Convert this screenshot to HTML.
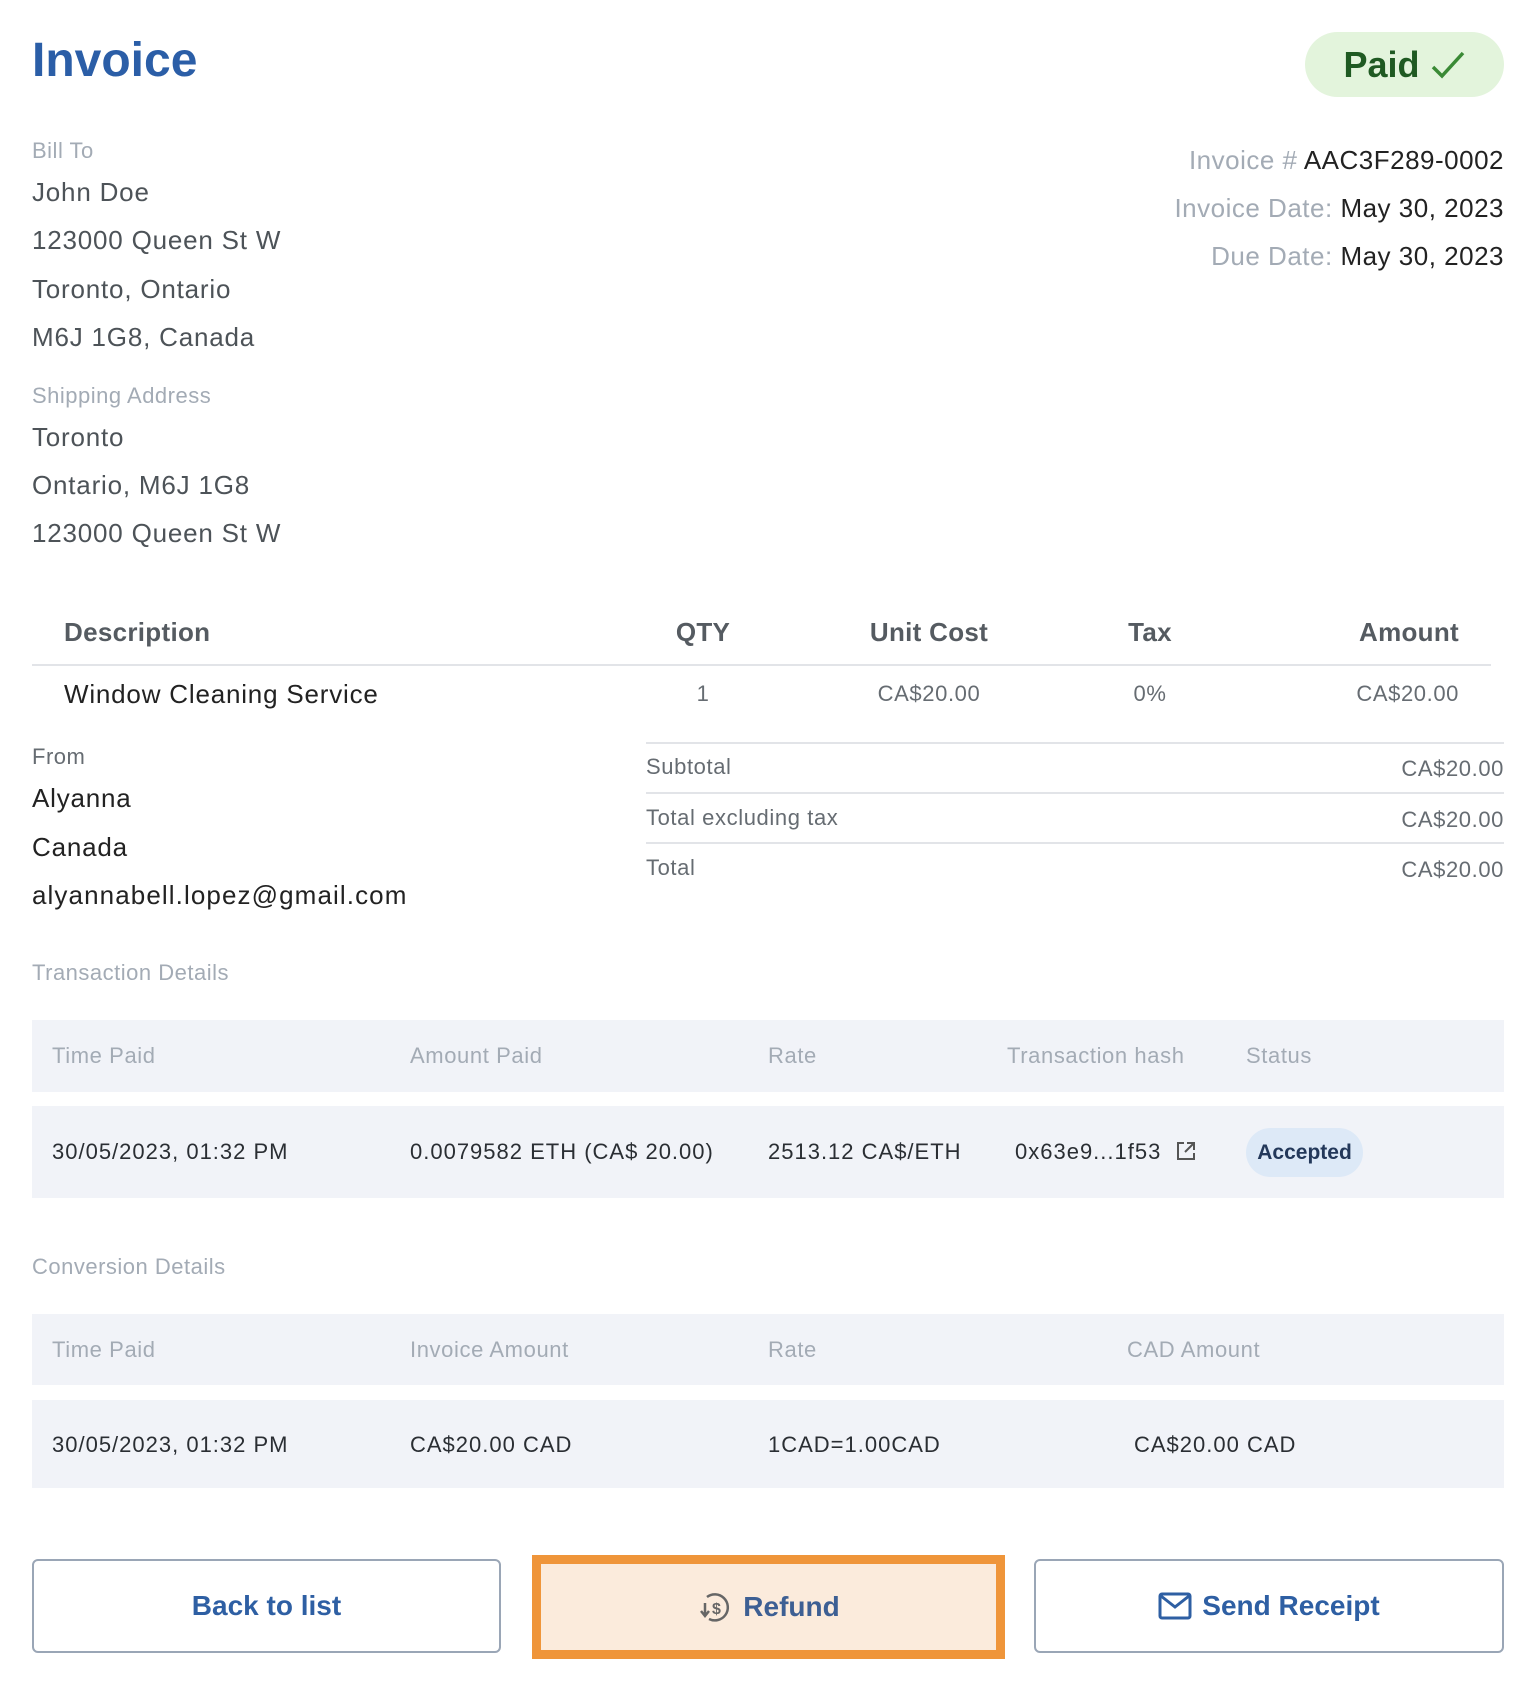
<!DOCTYPE html>
<html><head><meta charset="utf-8"><style>
*{margin:0;padding:0;box-sizing:border-box}
body{width:1536px;height:1682px;background:#fff;font-family:"Liberation Sans",Arial,sans-serif;position:relative;overflow:hidden}
.a{position:absolute;white-space:nowrap;line-height:30px;height:30px}
.lbl{color:#a3abb5;font-size:22px;letter-spacing:0.5px}
.v{color:#4d5358;font-size:26px;letter-spacing:0.8px}
.d{color:#222;font-size:26px;letter-spacing:0.8px}
.r{text-align:right}
.c{text-align:center}
.th{font-weight:bold;color:#555b61;font-size:26px;letter-spacing:0.3px}
.sm{color:#666c72;font-size:22px;letter-spacing:0.6px}
.band{position:absolute;left:32px;width:1472px;background:#f1f3f8}
.hd{color:#a3abb5;font-size:22px;letter-spacing:0.6px}
.cell{color:#2a2e33;font-size:22px;letter-spacing:1px}
.hl{position:absolute;height:2px;background:#e2e4e8}
.btn{position:absolute;top:1559px;height:94px;border:2px solid #9aa6b6;border-radius:6px;background:#fff;display:flex;align-items:center;justify-content:center;color:#2e5fa3;font-weight:bold;font-size:28px;gap:10px}
</style></head><body>
<div class="a" style="left:32px;top:31px;height:60px;line-height:60px;font-size:48px;font-weight:bold;color:#2b5ea7">Invoice</div>
<div style="position:absolute;left:1305px;top:32px;width:199px;height:65px;border-radius:33px;background:#e3f4dc;display:flex;align-items:center;justify-content:center;gap:10px;color:#1f5a22;font-weight:bold;font-size:36px">Paid<svg width="36" height="30" viewBox="0 0 36 30"><path d="M3 17 L12 26 L33 3" fill="none" stroke="#3a8a35" stroke-width="3.5"/></svg></div>

<div class="a lbl" style="left:32px;top:136px">Bill To</div>
<div class="a v" style="left:32px;top:177px">John Doe</div>
<div class="a v" style="left:32px;top:225px">123000 Queen St W</div>
<div class="a v" style="left:32px;top:274px">Toronto, Ontario</div>
<div class="a v" style="left:32px;top:322px">M6J 1G8, Canada</div>
<div class="a lbl" style="left:32px;top:381px">Shipping Address</div>
<div class="a v" style="left:32px;top:422px">Toronto</div>
<div class="a v" style="left:32px;top:470px">Ontario, M6J 1G8</div>
<div class="a v" style="left:32px;top:518px">123000 Queen St W</div>

<div class="a r" style="right:32px;top:145px;font-size:26px;letter-spacing:0.5px"><span style="color:#a3abb5">Invoice # </span><span style="color:#222">AAC3F289-0002</span></div>
<div class="a r" style="right:32px;top:193px;font-size:26px;letter-spacing:0.5px"><span style="color:#a3abb5">Invoice Date: </span><span style="color:#222">May 30, 2023</span></div>
<div class="a r" style="right:32px;top:241px;font-size:26px;letter-spacing:0.5px"><span style="color:#a3abb5">Due Date: </span><span style="color:#222">May 30, 2023</span></div>

<div class="a th" style="left:64px;top:617px">Description</div>
<div class="a th c" style="left:603px;width:200px;top:617px">QTY</div>
<div class="a th c" style="left:829px;width:200px;top:617px">Unit Cost</div>
<div class="a th c" style="left:1050px;width:200px;top:617px">Tax</div>
<div class="a th r" style="right:77px;top:617px">Amount</div>
<div class="hl" style="left:32px;width:1459px;top:664px"></div>
<div class="a d" style="left:64px;top:679px">Window Cleaning Service</div>
<div class="a sm c" style="left:603px;width:200px;top:679px">1</div>
<div class="a sm c" style="left:829px;width:200px;top:679px">CA$20.00</div>
<div class="a sm c" style="left:1050px;width:200px;top:679px">0%</div>
<div class="a sm r" style="right:77px;top:679px">CA$20.00</div>

<div class="hl" style="left:646px;width:858px;top:742px"></div>
<div class="hl" style="left:646px;width:858px;top:792px"></div>
<div class="hl" style="left:646px;width:858px;top:842px"></div>
<div class="a sm" style="left:646px;top:752px">Subtotal</div>
<div class="a sm r" style="right:32px;top:754px">CA$20.00</div>
<div class="a sm" style="left:646px;top:803px">Total excluding tax</div>
<div class="a sm r" style="right:32px;top:805px">CA$20.00</div>
<div class="a sm" style="left:646px;top:853px">Total</div>
<div class="a sm r" style="right:32px;top:855px">CA$20.00</div>

<div class="a" style="left:32px;top:742px;font-size:22px;color:#666c72;letter-spacing:0.5px">From</div>
<div class="a d" style="left:32px;top:783px">Alyanna</div>
<div class="a d" style="left:32px;top:832px">Canada</div>
<div class="a d" style="left:32px;top:880px;letter-spacing:1.1px">alyannabell.lopez@gmail.com</div>

<div class="a lbl" style="left:32px;top:958px">Transaction Details</div>
<div class="band" style="top:1020px;height:72px"></div>
<div class="band" style="top:1106px;height:92px"></div>
<div class="a hd" style="left:52px;top:1041px">Time Paid</div>
<div class="a hd" style="left:410px;top:1041px">Amount Paid</div>
<div class="a hd" style="left:768px;top:1041px">Rate</div>
<div class="a hd" style="left:1007px;top:1041px">Transaction hash</div>
<div class="a hd" style="left:1246px;top:1041px">Status</div>
<div class="a cell" style="left:52px;top:1137px">30/05/2023, 01:32 PM</div>
<div class="a cell" style="left:410px;top:1137px">0.0079582 ETH (CA$ 20.00)</div>
<div class="a cell" style="left:768px;top:1137px">2513.12 CA$/ETH</div>
<div class="a cell" style="left:1015px;top:1137px">0x63e9...1f53</div>
<svg style="position:absolute;left:1175px;top:1140px" width="22" height="22" viewBox="0 0 22 22"><path d="M9 3H3v16h16v-6" fill="none" stroke="#555" stroke-width="2"/><path d="M12 3h7v7M19 3l-9 9" fill="none" stroke="#555" stroke-width="2"/></svg>
<div style="position:absolute;left:1246px;top:1128px;width:117px;height:49px;border-radius:25px;background:#dde9f7;color:#23385a;font-weight:bold;font-size:21px;display:flex;align-items:center;justify-content:center">Accepted</div>

<div class="a lbl" style="left:32px;top:1252px">Conversion Details</div>
<div class="band" style="top:1314px;height:71px"></div>
<div class="band" style="top:1400px;height:88px"></div>
<div class="a hd" style="left:52px;top:1335px">Time Paid</div>
<div class="a hd" style="left:410px;top:1335px">Invoice Amount</div>
<div class="a hd" style="left:768px;top:1335px">Rate</div>
<div class="a hd" style="left:1127px;top:1335px">CAD Amount</div>
<div class="a cell" style="left:52px;top:1430px">30/05/2023, 01:32 PM</div>
<div class="a cell" style="left:410px;top:1430px">CA$20.00 CAD</div>
<div class="a cell" style="left:768px;top:1430px">1CAD=1.00CAD</div>
<div class="a cell" style="left:1134px;top:1430px">CA$20.00 CAD</div>

<div class="btn" style="left:32px;width:469px">Back to list</div>
<div class="btn" style="left:532px;top:1555px;width:473px;height:104px;border:9px solid #ef953a;border-radius:0;background:#fbebdc;color:#3d5f93"><svg width="36" height="36" viewBox="0 0 36 36"><path d="M10 8a13 13 0 1 1 2 22" fill="none" stroke="#666" stroke-width="2.5"/><path d="M8 14v12M4 22l4 5 4-5" fill="none" stroke="#666" stroke-width="2.5"/><text x="15" y="25" font-size="16" font-family="Liberation Sans" fill="#666" font-weight="bold">$</text></svg>Refund</div>
<div class="btn" style="left:1034px;width:470px"><svg width="34" height="28" viewBox="0 0 34 28"><rect x="2" y="2" width="30" height="24" rx="2" fill="none" stroke="#2e5fa3" stroke-width="3"/><path d="M3 4l14 11 14-11" fill="none" stroke="#2e5fa3" stroke-width="3"/></svg>Send Receipt</div>
</body></html>
